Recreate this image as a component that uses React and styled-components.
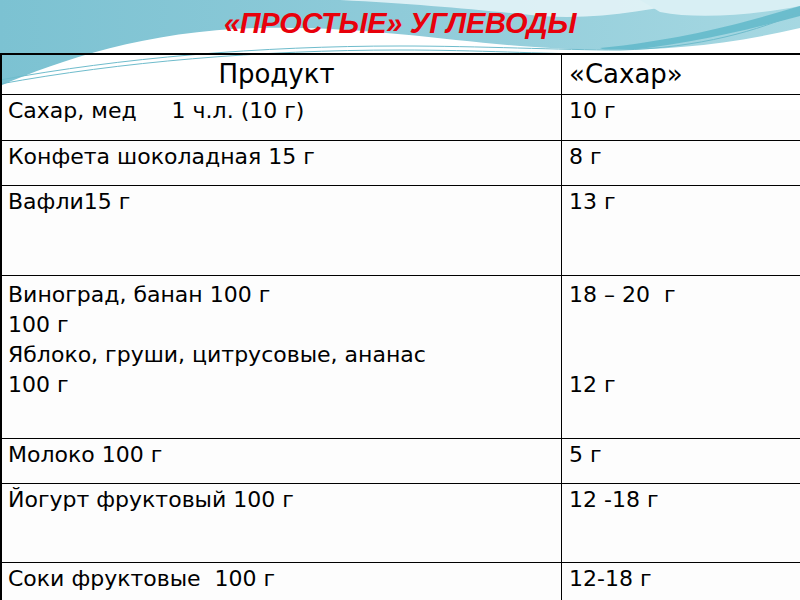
import React from "react";
import styled, { createGlobalStyle } from "styled-components";

const GlobalStyle = createGlobalStyle`
  html, body {
    margin: 0;
    padding: 0;
    background: #fff;
  }
`;

const rows = [
  { h: 46, left: ["Сахар, мед     1 ч.л. (10 г)"], right: ["10 г"] },
  { h: 45, left: ["Конфета шоколадная 15 г"], right: ["8 г"] },
  { h: 90, left: ["Вафли15 г"], right: ["13 г"] },
  {
    h: 163,
    pad: 4,
    left: ["Виноград, банан 100 г", "100 г", "Яблоко, груши, цитрусовые, ананас", "100 г"],
    right: ["18 – 20  г", "", "", "12 г"],
  },
  { h: 45, left: ["Молоко 100 г"], right: ["5 г"] },
  { h: 79, left: ["Йогурт фруктовый 100 г"], right: ["12 -18 г"] },
  { h: 45, left: ["Соки фруктовые  100 г"], right: ["12-18 г"] },
];

function Backdrop() {
  return (
    <Waves viewBox="0 0 800 110" preserveAspectRatio="none">
      <defs>
        <linearGradient id="teal" x1="0" y1="0" x2="1" y2="0">
          <stop offset="0" stopColor="#7cc2d2" />
          <stop offset="0.5" stopColor="#8fcbd9" />
          <stop offset="1" stopColor="#a6d8e2" />
        </linearGradient>
      </defs>
      <rect x="0" y="0" width="800" height="110" fill="url(#teal)" />
      <path
        d="M340 0 C420 4 480 10 540 16 C600 20 650 10 700 0 Z"
        fill="#e9f6f9"
        opacity="0.85"
      />
      <path
        d="M640 0 C700 0 760 0 800 0 L800 6 C760 14 700 20 660 12 Z"
        fill="#d8eff4"
      />
      <path
        d="M600 48 C680 40 740 24 800 6 L800 16 C740 32 680 46 610 52 Z"
        fill="#5db6c8"
        opacity="0.8"
      />
      <path
        d="M0 86 C60 60 150 30 260 28 C360 26 440 40 520 46 C600 52 690 54 800 28 L800 110 L0 110 Z"
        fill="#ffffff"
      />
      <path
        d="M0 84 C120 62 260 50 400 50 C480 50 540 54 600 54"
        fill="none"
        stroke="#6fbccc"
        strokeWidth="1"
      />
      <path
        d="M0 80 C120 58 260 46 400 46 C480 46 560 50 620 50 C700 48 760 30 800 12"
        fill="none"
        stroke="#6fbccc"
        strokeWidth="1"
      />
    </Waves>
  );
}

export default function App() {
  return (
    <>
      <GlobalStyle />
      <Slide>
        <Backdrop />
        <TitleBar>
          <Title>«ПРОСТЫЕ» УГЛЕВОДЫ</Title>
        </TitleBar>
        <Table>
          <tbody>
            <HeadRow>
              <HeadCell $center>Продукт</HeadCell>
              <HeadCell>«Сахар»</HeadCell>
            </HeadRow>
            {rows.map((r, i) => (
              <BodyRow key={i} $h={r.h}>
                <Cell $pad={r.pad}>
                  {r.left.map((t, j) => (
                    <Line key={j}>{t}</Line>
                  ))}
                </Cell>
                <Cell $pad={r.pad}>
                  {r.right.map((t, j) => (
                    <Line key={j}>{t}</Line>
                  ))}
                </Cell>
              </BodyRow>
            ))}
          </tbody>
        </Table>
      </Slide>
    </>
  );
}

const Slide = styled.div`
  position: relative;
  width: 800px;
  height: 600px;
  overflow: hidden;
  background: #fdfdfd;
`;

const Waves = styled.svg`
  position: absolute;
  left: 0;
  top: 0;
  width: 800px;
  height: 110px;
  z-index: 0;
`;

const TitleBar = styled.div`
  position: relative;
  z-index: 1;
  height: 53px;
  display: flex;
  align-items: center;
  justify-content: center;
  padding: 0 0 6px 0;
  box-sizing: border-box;
`;

const Title = styled.h1`
  margin: 0;
  font-family: "Liberation Sans", Arial, sans-serif;
  font-style: italic;
  font-weight: 700;
  font-size: 29px;
  letter-spacing: -0.3px;
  color: #e8000b;
`;

const Table = styled.table`
  position: relative;
  z-index: 1;
  width: 830px;
  border-collapse: collapse;
  table-layout: fixed;
  font-family: "DejaVu Sans", Verdana, sans-serif;
  color: #000;
  border-top: 2px solid #000;
  border-left: 2px solid #000;
`;

const HeadRow = styled.tr`
  height: 40px;
  border-bottom: 1px solid #000;
`;

const HeadCell = styled.td`
  padding: 0 7px;
  font-size: 26px;
  text-align: ${(p) => (p.$center ? "center" : "left")};
  vertical-align: middle;
  border-right: 1px solid #000;
  &:first-child {
    width: 537px;
    padding-left: 6px;
    padding-right: 16px;
  }
`;

const BodyRow = styled.tr`
  height: ${(p) => p.$h}px;
  border-bottom: 1px solid #000;
`;

const Cell = styled.td`
  padding: ${(p) => p.$pad || 1}px 7px 0 7px;
  vertical-align: top;
  font-size: 22px;
  line-height: 30px;
  border-right: 1px solid #000;
  white-space: pre;
  &:first-child {
    padding-left: 6px;
  }
`;

const Line = styled.div`
  min-height: 30px;
`;
